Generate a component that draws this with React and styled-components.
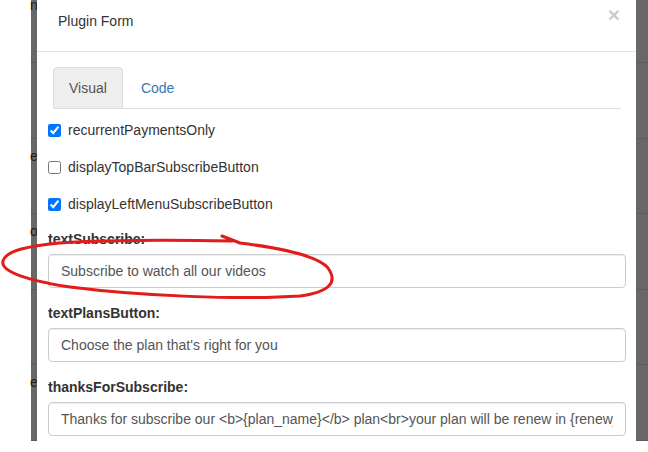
import React from 'react';
import styled, { createGlobalStyle } from 'styled-components';

const GlobalStyle = createGlobalStyle`
  html, body {
    margin: 0;
    padding: 0;
    background: #fff;
  }
  body {
    font-family: "Liberation Sans", Arial, sans-serif;
    font-size: 14px;
    line-height: 20px;
    color: #333;
  }
  * {
    box-sizing: border-box;
  }
`;

const Page = styled.div`
  position: relative;
  display: flex;
  width: 648px;
  height: 452px;
  overflow: hidden;
`;

// strip of the page behind the dialog
const Behind = styled.div`
  display: flex;
  flex-direction: column;
  flex: 0 0 ${(p) => p.width}px;
  min-width: 0;
`;

const BehindRow = styled.div`
  display: flex;
  height: ${(p) => (p.first ? 63 : 75.6)}px;
  flex-shrink: 0;
`;

const WhiteCell = styled.div`
  flex: 0 0 ${(p) => p.width}px;
  background: #fff;
`;

const ShadeCell = styled.div`
  flex: 1;
  min-width: 0;
  background: #686868;
  border-bottom: 1px solid #5c5c5c;
  color: #1e1e1e;
  padding-top: ${(p) => (p.first ? 0 : 7)}px;
  margin-top: ${(p) => (p.first ? -5 : 0)}px;
  text-indent: -1px;
  white-space: nowrap;
  overflow: visible;
`;

const Dialog = styled.div`
  flex: 0 0 599px;
  background: #fff;
  display: flex;
  flex-direction: column;
`;

const Header = styled.div`
  display: flex;
  justify-content: space-between;
  align-items: flex-start;
  padding: 11px 16px 20px 21px;
  border-bottom: 1px solid #e5e5e5;
`;

const Title = styled.h4`
  margin: 0;
  font-size: 14px;
  font-weight: normal;
  line-height: 20px;
  color: #333;
`;

const Close = styled.button`
  border: 0;
  background: none;
  padding: 0;
  margin-top: -7px;
  font-family: "Liberation Sans", Arial, sans-serif;
  font-size: 21px;
  font-weight: bold;
  line-height: 1;
  color: #000;
  opacity: 0.2;
  cursor: pointer;
`;

const Body = styled.div`
  padding: 15px 10px 0 11px;
`;

const Tabs = styled.ul`
  display: flex;
  list-style: none;
  margin: 0 5px;
  padding: 0;
  border-bottom: 1px solid #ddd;
`;

const Tab = styled.li`
  margin-right: 2px;
  margin-bottom: -1px;
  padding: 10px 15px;
  line-height: 20px;
  border: 1px solid ${(p) => (p.active ? '#ddd' : 'transparent')};
  border-radius: 4px 4px 0 0;
  background: ${(p) => (p.active ? '#eee' : 'transparent')};
  color: ${(p) => (p.active ? '#555' : '#337ab7')};
  cursor: pointer;
`;

const Checks = styled.div`
  display: flex;
  flex-direction: column;
  gap: 17px;
  margin-top: 11px;
`;

const CheckRow = styled.label`
  display: flex;
  align-items: center;
  gap: 7px;
  height: 20px;

  input {
    margin: 0;
    width: 13px;
    height: 13px;
  }
`;

const Group = styled.div`
  margin-top: 15px;
`;

const FieldLabel = styled.label`
  display: block;
  margin-bottom: 5px;
  font-weight: bold;
  line-height: 20px;
`;

const TextInput = styled.input`
  display: block;
  width: 100%;
  height: 34px;
  padding: 6px 12px;
  border: 1px solid #ccc;
  border-radius: 4px;
  box-shadow: inset 0 1px 1px rgba(0, 0, 0, 0.075);
  font-family: "Liberation Sans", Arial, sans-serif;
  font-size: 14px;
  color: #555;
  background: #fff;
  outline: none;
`;

const Scribble = styled.svg`
  position: absolute;
  top: 0;
  left: 0;
  pointer-events: none;
`;

const leftRows = ['n', '', 'e', 'o', '', 'e.'];
const rightRows = ['', '', '', '', '', ''];

const checks = [
  { name: 'recurrentPaymentsOnly', checked: true },
  { name: 'displayTopBarSubscribeButton', checked: false },
  { name: 'displayLeftMenuSubscribeButton', checked: true },
];

const fields = [
  { name: 'textSubscribe', value: 'Subscribe to watch all our videos' },
  { name: 'textPlansButton', value: "Choose the plan that's right for you" },
  {
    name: 'thanksForSubscribe',
    value:
      'Thanks for subscribe our <b>{plan_name}</b> plan<br>your plan will be renew in {renew_date}',
  },
];

const App = () => {
  return (
    <>
      <GlobalStyle />
      <Page>
        <Behind width={37}>
          {leftRows.map((t, i) => (
            <BehindRow key={i} first={i === 0}>
              <WhiteCell width={31} />
              <ShadeCell first={i === 0}>{t}</ShadeCell>
            </BehindRow>
          ))}
        </Behind>

        <Dialog>
          <Header>
            <Title>Plugin Form</Title>
            <Close aria-label="Close">×</Close>
          </Header>
          <Body>
            <Tabs>
              <Tab active>Visual</Tab>
              <Tab>Code</Tab>
            </Tabs>

            <Checks>
              {checks.map((c) => (
                <CheckRow key={c.name}>
                  <input type="checkbox" defaultChecked={c.checked} />
                  {c.name}
                </CheckRow>
              ))}
            </Checks>

            {fields.map((f) => (
              <Group key={f.name}>
                <FieldLabel>{f.name}:</FieldLabel>
                <TextInput type="text" defaultValue={f.value} />
              </Group>
            ))}
          </Body>
        </Dialog>

        <Behind width={12}>
          {rightRows.map((t, i) => (
            <BehindRow key={i} first={i === 0}>
              <ShadeCell first={i === 0}>{t}</ShadeCell>
            </BehindRow>
          ))}
        </Behind>

        <Scribble width="648" height="452" viewBox="0 0 648 452">
          <path
            d="M240 243 C280 248 318 256 328 268 C338 282 330 292 300 296 C240 300 140 296 70 287 C30 281 0 272 3 261 C6 250 30 246 60 243 C120 239 180 240 232 241 M222 236 L240 243"
            fill="none"
            stroke="#e31b1b"
            strokeWidth="3"
            strokeLinecap="round"
            strokeLinejoin="round"
          />
        </Scribble>
      </Page>
    </>
  );
};

export default App;
